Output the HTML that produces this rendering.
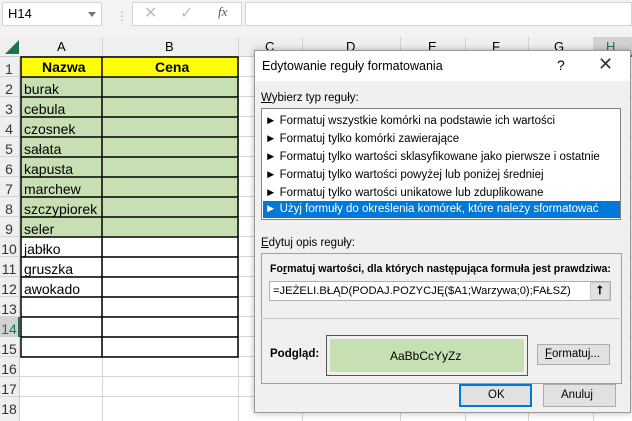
<!DOCTYPE html><html><head><meta charset="utf-8"><style>
*{box-sizing:border-box;margin:0;padding:0}
body{width:632px;height:421px;overflow:hidden;background:#fff;font-family:"Liberation Sans",sans-serif;position:relative}
.a{position:absolute}
.t{font-size:14px;color:#000}
.d{font-size:11.5px;color:#000;white-space:nowrap}
</style></head><body>
<div class="a" style="left:0;top:0;width:632px;height:37px;background:#f3f3f3"></div>
<div class="a" style="left:2px;top:2px;width:100px;height:24px;background:#fff;border:1px solid #d4d4d4"></div>
<div class="a t" style="left:8px;top:6px;font-size:13px">H14</div>
<div class="a" style="left:88px;top:12px;border:4px solid transparent;border-top:5px solid #777"></div>
<div class="a" style="left:116px;top:9px;color:#aaa;font-size:12px">⋮</div>
<div class="a" style="left:132px;top:2px;width:110px;height:24px;background:#fff;border:1px solid #d4d4d4"></div>
<div class="a" style="left:144px;top:3px;color:#bbb;font-size:16px">✕</div>
<div class="a" style="left:180px;top:3px;color:#bbb;font-size:16px">✓</div>
<div class="a" style="left:218px;top:4px;color:#555;font-size:13px;font-style:italic;font-family:'Liberation Serif',serif">fx</div>
<div class="a" style="left:245px;top:2px;width:387px;height:24px;background:#fff;border:1px solid #d4d4d4"></div>
<div class="a" style="left:0;top:37px;width:632px;height:20px;background:#efefef;border-bottom:1px solid #ccc"></div>
<div class="a" style="left:0;top:57px;width:20px;height:364px;background:#efefef;border-right:1px solid #ccc"></div>
<div class="a" style="left:5px;top:40px;width:0;height:0;border-left:14px solid transparent;border-bottom:14px solid #217346"></div>
<div class="a t" style="left:57px;top:39px;font-size:13px">A</div>
<div class="a t" style="left:165px;top:39px;font-size:13px">B</div>
<div class="a t" style="left:265px;top:39px;font-size:13px">C</div>
<div class="a t" style="left:346px;top:39px;font-size:13px">D</div>
<div class="a t" style="left:428px;top:39px;font-size:13px">E</div>
<div class="a t" style="left:492px;top:39px;font-size:13px">F</div>
<div class="a t" style="left:554px;top:39px;font-size:13px">G</div>
<div class="a" style="left:593px;top:37px;width:39px;height:20px;background:#d2d2d2;border-bottom:2px solid #217346"></div>
<div class="a t" style="left:606px;top:39px;font-size:13px;color:#217346">H</div>
<svg class="a" style="left:0;top:0" width="632" height="421">
<g stroke="#d4d4d4" stroke-width="1">
<line x1="102.5" y1="37" x2="102.5" y2="421"/><line x1="238.5" y1="37" x2="238.5" y2="421"/><line x1="302.5" y1="37" x2="302.5" y2="421"/><line x1="400.5" y1="37" x2="400.5" y2="421"/><line x1="465.5" y1="37" x2="465.5" y2="421"/><line x1="528.5" y1="37" x2="528.5" y2="421"/><line x1="593.5" y1="37" x2="593.5" y2="421"/>
</g>
<g stroke="#d4d4d4"><line x1="0" y1="76.5" x2="632" y2="76.5"/><line x1="0" y1="96.5" x2="632" y2="96.5"/><line x1="0" y1="116.5" x2="632" y2="116.5"/><line x1="0" y1="136.5" x2="632" y2="136.5"/><line x1="0" y1="156.5" x2="632" y2="156.5"/><line x1="0" y1="176.5" x2="632" y2="176.5"/><line x1="0" y1="196.5" x2="632" y2="196.5"/><line x1="0" y1="216.5" x2="632" y2="216.5"/><line x1="0" y1="236.5" x2="632" y2="236.5"/><line x1="0" y1="256.5" x2="632" y2="256.5"/><line x1="0" y1="276.5" x2="632" y2="276.5"/><line x1="0" y1="296.5" x2="632" y2="296.5"/><line x1="0" y1="316.5" x2="632" y2="316.5"/><line x1="0" y1="336.5" x2="632" y2="336.5"/><line x1="0" y1="356.5" x2="632" y2="356.5"/><line x1="0" y1="376.5" x2="632" y2="376.5"/><line x1="0" y1="396.5" x2="632" y2="396.5"/></g>
<rect x="21" y="57" width="217" height="20" fill="#ffff00"/>
<rect x="21" y="77" width="217" height="160" fill="#c6e0b4"/>
<g stroke="#000" stroke-width="1.5" fill="none">
<rect x="21" y="57" width="217" height="300"/>
<line x1="102" y1="57" x2="102" y2="357"/>
<line x1="21" y1="77" x2="238" y2="77"/><line x1="21" y1="97" x2="238" y2="97"/><line x1="21" y1="117" x2="238" y2="117"/><line x1="21" y1="137" x2="238" y2="137"/><line x1="21" y1="157" x2="238" y2="157"/><line x1="21" y1="177" x2="238" y2="177"/><line x1="21" y1="197" x2="238" y2="197"/><line x1="21" y1="217" x2="238" y2="217"/><line x1="21" y1="237" x2="238" y2="237"/><line x1="21" y1="257" x2="238" y2="257"/><line x1="21" y1="277" x2="238" y2="277"/><line x1="21" y1="297" x2="238" y2="297"/><line x1="21" y1="317" x2="238" y2="317"/><line x1="21" y1="337" x2="238" y2="337"/>
</g>
<rect x="0" y="317" width="20" height="20" fill="#d2d2d2"/>
<line x1="19" y1="317" x2="19" y2="337" stroke="#217346" stroke-width="2"/>
</svg>
<div class="a t" style="left:42px;top:59px;font-weight:bold">Nazwa</div>
<div class="a t" style="left:155px;top:59px;font-weight:bold">Cena</div>
<div class="a t" style="left:24px;top:79px;line-height:20px">burak<br>cebula<br>czosnek<br>sałata<br>kapusta<br>marchew<br>szczypiorek<br>seler<br>jabłko<br>gruszka<br>awokado</div>
<div class="a t" style="left:0;top:59px;width:18px;text-align:center;line-height:20px;color:#333">1<br>2<br>3<br>4<br>5<br>6<br>7<br>8<br>9<br>10<br>11<br>12<br>13<br><span style="color:#217346">14</span><br>15<br>16<br>17<br>18</div>
<!-- dialog -->
<div class="a" style="left:254px;top:50px;width:377px;height:363px;background:#f0f0f0;border:1px solid #9a9a9a;box-shadow:0 0 6px rgba(0,0,0,.3)"></div>
<div class="a" style="left:255px;top:51px;width:375px;height:30px;background:#fff"></div>
<div class="a" style="left:262px;top:59px;font-size:12.5px">Edytowanie reguły formatowania</div>
<div class="a" style="left:557px;top:57px;font-size:14px">?</div>
<div class="a" style="left:598px;top:54px;font-size:18px;color:#333">✕</div>
<div class="a d" style="left:261px;top:92px"><u>W</u>ybierz typ reguły:</div>
<div class="a" style="left:261px;top:108px;width:360px;height:112px;background:#fff;border:1px solid #828282"></div>
<div class="a d" style="left:265px;top:112px;line-height:18px">► Formatuj wszystkie komórki na podstawie ich wartości<br>► Formatuj tylko komórki zawierające<br>► Formatuj tylko wartości sklasyfikowane jako pierwsze i ostatnie<br>► Formatuj tylko wartości powyżej lub poniżej średniej<br>► Formatuj tylko wartości unikatowe lub zduplikowane</div>
<div class="a d" style="left:263px;top:201px;width:357px;height:17px;background:#0078d7;color:#fff;padding:2px 0 0 2px">► Użyj formuły do określenia komórek, które należy sformatować</div>
<div class="a d" style="left:261px;top:237px"><u>E</u>dytuj opis reguły:</div>
<div class="a" style="left:261px;top:253px;width:361px;height:131px;background:#f0f0f0;border:1px solid #a0a0a0"></div>
<div class="a d" style="left:270px;top:263px;font-weight:bold;font-size:10.6px">Fo<u>r</u>matuj wartości, dla których następująca formuła jest prawdziwa:</div>
<div class="a" style="left:269px;top:281px;width:342px;height:20px;background:#fff;border:1px solid #b0b0b0"></div>
<div class="a d" style="left:273px;top:285px;font-size:11.2px">=JEŻELI.BŁĄD(PODAJ.POZYCJĘ($A1;Warzywa;0);FAŁSZ)</div>
<div class="a" style="left:590px;top:282px;width:20px;height:18px;background:#e1e1e1;border:1px solid #ccc;text-align:center;font-size:12px;font-weight:bold">⭡</div>
<div class="a" style="left:261px;top:318px;width:361px;height:1px;background:#c8c8c8"></div>
<div class="a d" style="left:270px;top:348px;font-weight:bold">Podgląd:</div>
<div class="a" style="left:327px;top:336px;width:200px;height:39px;background:#c6e0b4;border:3px solid #f0f0f0;outline:1px solid #555"></div>
<div class="a" style="left:390px;top:349px;font-size:12px">AaBbCcYyZz</div>
<div class="a" style="left:537px;top:344px;width:73px;height:21px;background:#e1e1e1;border:1px solid #adadad"></div>
<div class="a d" style="left:545px;top:348px"><u>F</u>ormatuj...</div>
<div class="a" style="left:459px;top:384px;width:73px;height:23px;background:#e1e1e1;border:2px solid #0078d7"></div>
<div class="a d" style="left:488px;top:389px">OK</div>
<div class="a" style="left:543px;top:384px;width:73px;height:23px;background:#e1e1e1;border:1px solid #adadad"></div>
<div class="a d" style="left:561px;top:389px">Anuluj</div>
</body></html>
